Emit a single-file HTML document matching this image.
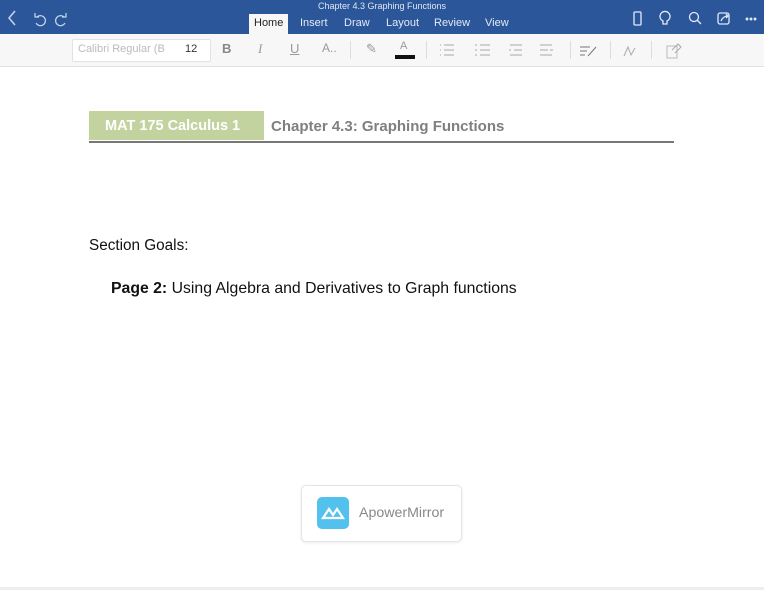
<!DOCTYPE html>
<html><head><style>
body{margin:0;width:764px;height:590px;background:#fff;font-family:"Liberation Sans",sans-serif;position:relative;overflow:hidden}
.hdr{position:absolute;left:0;top:0;width:764px;height:34px;background:#2b579a;color:#dfe7f3}
.t{position:absolute;font-size:12px;top:17px;color:#e3eaf5}
.tb{position:absolute;left:0;top:34px;width:764px;height:32px;background:#f7f7f7;border-bottom:1px solid #e2e2e2}
.ic{position:absolute;color:#9a9a9a;font-size:13px;top:41px}
.sep{position:absolute;top:41px;width:1px;height:18px;background:#ddd}
</style></head><body>
<div class="hdr">
<div style="position:absolute;left:0;width:764px;top:1px;text-align:center;font-size:9px;color:#dfe7f3">Chapter 4.3 Graphing Functions</div>
<svg style="position:absolute;left:5px;top:9px" width="70" height="20" fill="none" stroke="#c9d6ea" stroke-width="1.5"><path d="M10 2 L4 9 L10 16"/><path d="M32 8 a5 5 0 1 1 -1 6 M30 4 v4 h4" stroke-width="1.2"/><path d="M59 8 a5 5 0 1 0 1 6 M61 4 v4 h-4" stroke-width="1.2"/></svg>
<div style="position:absolute;left:249px;top:14px;width:39px;height:20px;background:#f7f7f7"></div>
<div class="t" style="left:254px;color:#222;font-size:11px">Home</div>
<div class="t" style="left:300px;font-size:11px">Insert</div>
<div class="t" style="left:344px;font-size:11px">Draw</div>
<div class="t" style="left:386px;font-size:11px">Layout</div>
<div class="t" style="left:434px;font-size:11px">Review</div>
<div class="t" style="left:485px;font-size:11px">View</div>
<svg style="position:absolute;left:630px;top:10px" width="130" height="20" fill="none" stroke="#e3eaf5" stroke-width="1.3"><rect x="4" y="2" width="7" height="13" rx="1"/><path d="M33 11 a5 5 0 1 1 4 0 v3 h-4z"/><circle cx="64" cy="7" r="4.5"/><path d="M67 10 l4 4"/><rect x="88" y="3" width="11" height="11" rx="2"/><path d="M91 11 q2 -5 7 -5 M96 4 l2 2 -2 2"/><circle cx="117" cy="9" r=".8" fill="#fff"/><circle cx="121" cy="9" r=".8" fill="#fff"/><circle cx="125" cy="9" r=".8" fill="#fff"/></svg>
</div>
<div class="tb"></div>
<div style="position:absolute;left:72px;top:39px;width:137px;height:21px;border:1px solid #e3e3e3;background:#fff;border-radius:2px"></div>
<div class="ic" style="left:78px;top:43px;font-size:11px;color:#bbb">Calibri Regular (B</div>
<div class="ic" style="left:185px;top:43px;font-size:11px;color:#333">12</div>
<div class="ic" style="left:222px;font-weight:bold;color:#888">B</div>
<div class="ic" style="left:258px;font-style:italic;font-family:'Liberation Serif'">I</div>
<div class="ic" style="left:290px;text-decoration:underline">U</div>
<div class="ic" style="left:322px;font-size:12px">A..</div>
<div class="sep" style="left:350px"></div>
<div class="ic" style="left:366px">✎</div>
<div class="ic" style="left:400px;font-size:11px;top:40px">A</div>
<div style="position:absolute;left:395px;top:55px;width:20px;height:4px;background:#111"></div>
<div class="sep" style="left:426px"></div>
<svg style="position:absolute;left:436px;top:42px" width="250" height="18" fill="none" stroke="#aaa" stroke-width="1"><path d="M8 3h10M8 8h10M8 13h10M4 3h1M4 8h1M4 13h1"/><path d="M44 3h10M44 8h10M44 13h10M39 3h2M39 8h2M39 13h2"/><path d="M74 3h12M78 8h8M74 13h12M75 8l-2 0"/><path d="M104 3h12M104 8h8M104 13h12M114 8h3"/><path d="M144 5h10M144 9h7M144 13h5M152 14l8-9" stroke="#777"/><path d="M188 14l4-9 3 8 4-7" /><rect x="231" y="4" width="10" height="12" stroke="#bbb"/><path d="M236 8l6-6 3 3-6 6"/></svg>
<div class="sep" style="left:570px"></div><div class="sep" style="left:610px"></div><div class="sep" style="left:651px"></div>

<div style="position:absolute;left:89px;top:111px;width:175px;height:29px;background:#c3d3a0"></div>
<div style="position:absolute;left:105px;top:118px;font-size:14.5px;font-weight:bold;color:#fff">MAT 175 Calculus 1</div>
<div style="position:absolute;left:271px;top:118px;font-size:15px;font-weight:bold;color:#7f7f7f">Chapter 4.3: Graphing Functions</div>
<div style="position:absolute;left:89px;top:141px;width:585px;height:2px;background:#777"></div>
<div style="position:absolute;left:89px;top:237px;font-size:15.3px;color:#111">Section Goals:</div>
<div style="position:absolute;left:111px;top:280px;font-size:15.8px;color:#111"><b>Page 2:</b> Using Algebra and Derivatives to Graph functions</div>

<div style="position:absolute;left:301px;top:485px;width:159px;height:55px;border:1px solid #e4e4e4;border-radius:5px;background:#fff;box-shadow:0 1px 3px rgba(0,0,0,.08)"></div>
<div style="position:absolute;left:317px;top:497px;width:32px;height:32px;border-radius:5px;background:#53c1ee"></div>
<svg style="position:absolute;left:317px;top:497px" width="32" height="32" fill="none" stroke="#fff" stroke-width="2.2"><path d="M6 21l6-9 4 6 4-6 6 9z"/></svg>
<div style="position:absolute;left:359px;top:505px;font-size:14.2px;color:#888">ApowerMirror</div>
<div style="position:absolute;left:0;top:587px;width:764px;height:3px;background:#eee"></div>
</body></html>
